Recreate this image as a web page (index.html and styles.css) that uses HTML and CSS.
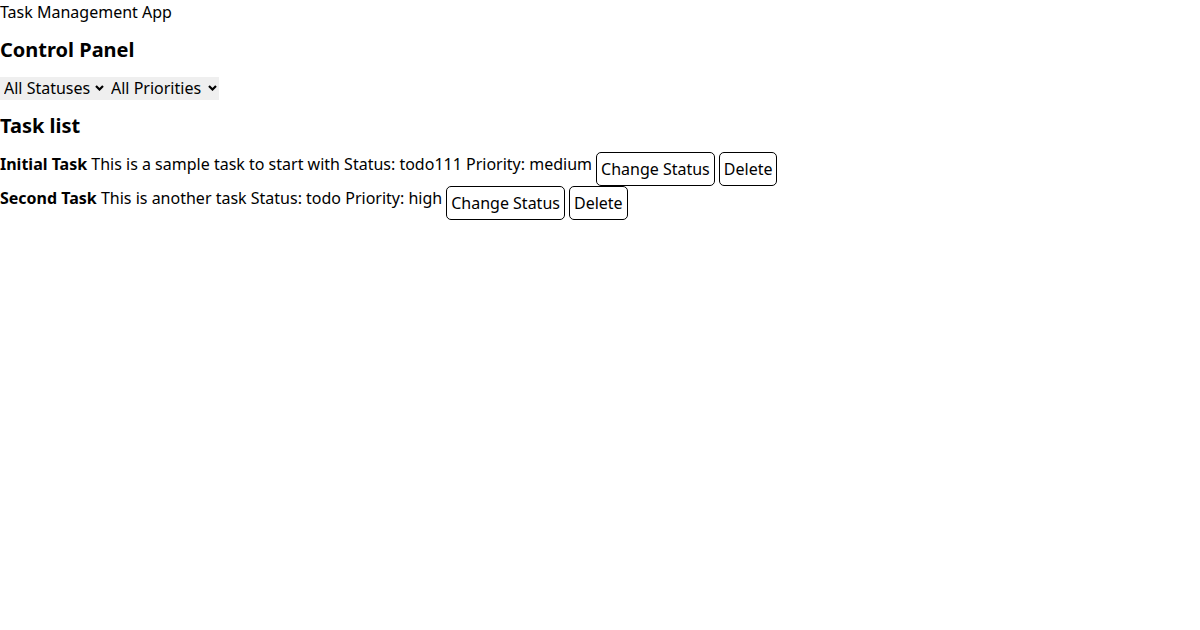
FILE: index.html
```html
<!DOCTYPE html>
<html lang="en">
<head>
<meta charset="utf-8">
<title>Task Management App</title>
<link rel="stylesheet" href="styles.css">
</head>
<body>
<div class="app-title">Task Management App</div>
<h2 class="section-title panel-title">Control Panel</h2>
<div class="filters">
  <label class="filter">
    <select class="filter-select status-select">
      <option>All Statuses</option>
      <option>todo</option>
      <option>done</option>
    </select>
    <svg class="chevron" width="9" height="6" viewBox="0 0 9 6"><polyline points="1,1 4.5,4.5 8,1" fill="none" stroke="#000" stroke-width="2.2"/></svg>
  </label>
  <label class="filter">
    <select class="filter-select priority-select">
      <option>All Priorities</option>
      <option>low</option>
      <option>medium</option>
      <option>high</option>
    </select>
    <svg class="chevron" width="9" height="6" viewBox="0 0 9 6"><polyline points="1,1 4.5,4.5 8,1" fill="none" stroke="#000" stroke-width="2.2"/></svg>
  </label>
</div>
<h2 class="section-title list-title">Task list</h2>
<ul class="task-list">
  <li class="task">
    <span class="task-text"><strong>Initial Task</strong> This is a sample task to start with Status: todo111 Priority: medium</span>
    <button class="task-btn">Change Status</button>
    <button class="task-btn">Delete</button>
  </li>
  <li class="task">
    <span class="task-text"><strong>Second Task</strong> This is another task Status: todo Priority: high</span>
    <button class="task-btn">Change Status</button>
    <button class="task-btn">Delete</button>
  </li>
</ul>
</body>
</html>
```
FILE: styles.css
```css
html, body {
  margin: 0;
  padding: 0;
  background: #fff;
}
body {
  font-family: "Noto Sans", "DejaVu Sans", sans-serif;
  font-size: 16px;
  color: #000;
}
.app-title {
  line-height: 22px;
  padding-top: 1px;
}
.section-title {
  font-size: 20px;
  font-weight: 700;
  line-height: 27px;
  margin: 0;
}
.panel-title {
  margin-top: 13px;
}
.filters {
  display: inline-flex;
  margin-top: 14px;
  height: 23px;
  background: #efefef;
  vertical-align: top;
}
.filter {
  display: inline-flex;
  align-items: center;
  padding: 0 3px 1px 4px;
}
.filter-select {
  appearance: none;
  -webkit-appearance: none;
  border: none;
  background: transparent;
  font: inherit;
  color: #000;
  padding: 0;
  margin: 0;
  line-height: 22px;
}
.status-select {
  width: 87px;
}
.priority-select {
  width: 93px;
}
.filter + .filter {
  padding-right: 2px;
}
.chevron {
  margin-left: 4px;
  display: block;
}
.list-title {
  margin-top: 12px;
}
.task-list {
  list-style: none;
  margin: 13px 0 0;
  padding: 0;
}
.task {
  display: flex;
  align-items: flex-start;
  gap: 4px;
}
.task-text {
  line-height: 22px;
  padding-top: 1px;
  white-space: nowrap;
}
.task-btn {
  font: inherit;
  line-height: 22px;
  color: #000;
  background: #fff;
  border: 1px solid #000;
  border-radius: 5px;
  padding: 5px 4px;
  margin: 0;
}
```
